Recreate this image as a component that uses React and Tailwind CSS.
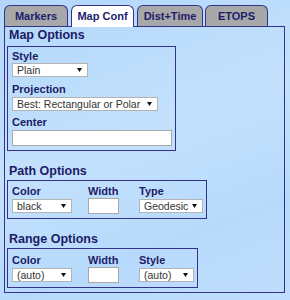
import React from "react";

function Select({ value, w }) {
  return (
    <div
      className={`flex items-center justify-between h-[14px] border border-[#b3b3b3] bg-white pl-[4px] pr-[5px] text-[10.5px] leading-none text-[#333333] ${w}`}
    >
      <span className="whitespace-nowrap">{value}</span>
      <svg width="5" height="4" viewBox="0 0 5 4" className="shrink-0">
        <polygon points="0,0 5,0 2.5,4" fill="#111" />
      </svg>
    </div>
  );
}

function Input({ w }) {
  return <div className={`h-[16px] border border-[#a8a8a8] bg-white ${w}`} />;
}

function Label({ children, className = "" }) {
  return (
    <div className={`text-[11px] font-bold leading-[13px] text-[#1c1c66] ${className}`}>
      {children}
    </div>
  );
}

function Heading({ children, className = "" }) {
  return (
    <div className={`ml-[2px] text-[12.5px] font-bold leading-[15px] text-[#1c1c66] ${className}`}>
      {children}
    </div>
  );
}

function Tab({ label, active, className }) {
  return (
    <div
      className={`flex items-center justify-center border border-b-0 border-[#33338a] rounded-t-[6px] text-[11px] font-bold text-[#1d1d6b] ${
        active ? "relative z-10 h-[22px] -mb-px bg-white" : "h-[21px] bg-[#a8a8a8]"
      } ${className}`}
    >
      {label}
    </div>
  );
}

function ThreeCol({ a, b, c }) {
  return (
    <div className="flex">
      <div className="w-[76px]">{a}</div>
      <div className="w-[51px]">{b}</div>
      <div>{c}</div>
    </div>
  );
}

export default function App() {
  return (
    <div className="w-[290px] h-[300px] overflow-hidden pt-[5px] pl-[4px] font-['Liberation_Sans',Arial,sans-serif] bg-[linear-gradient(160deg,#b3d7fb_0%,#c3e1fd_45%,#b7dafc_75%,#c0defd_100%)]">
      <div className="flex items-end h-[21px]">
        <Tab label="Markers" className="w-[64px]" />
        <Tab label="Map Conf" active className="ml-[3px] w-[63px]" />
        <Tab label="Dist+Time" className="ml-[3px] w-[66px]" />
        <Tab label="ETOPS" className="ml-[2px] w-[63px]" />
      </div>
      <div className="w-[281px] h-[267px] border border-[#33338a] pl-[2px]">
        <Heading className="mt-[1px]">Map Options</Heading>
        <div className="mt-[3px] w-fit border border-[#33338a] pl-[4px] pr-[3px] pt-[3px] pb-[4px]">
          <Label>Style</Label>
          <Select value="Plain" w="w-[76px]" />
          <Label className="mt-[6px]">Projection</Label>
          <div className="mt-[1px]">
            <Select value="Best: Rectangular or Polar" w="w-[146px]" />
          </div>
          <Label className="mt-[5px]">Center</Label>
          <div className="mt-[1px]">
            <Input w="w-[160px]" />
          </div>
        </div>

        <Heading className="mt-[13px]">Path Options</Heading>
        <div className="mt-[1px] w-fit border border-[#33338a] pl-[4px] pr-[3px] pt-[4px] pb-[4px]">
          <ThreeCol a={<Label>Color</Label>} b={<Label>Width</Label>} c={<Label>Type</Label>} />
          <div className="flex items-center h-[16px]">
            <div className="w-[76px]">
              <Select value="black" w="w-[60px]" />
            </div>
            <div className="w-[51px]">
              <Input w="w-[31px]" />
            </div>
            <Select value="Geodesic" w="w-[64px]" />
          </div>
        </div>

        <Heading className="mt-[13px]">Range Options</Heading>
        <div className="mt-[1px] w-fit border border-[#33338a] pl-[4px] pr-[3px] pt-[5px] pb-[4px]">
          <ThreeCol a={<Label>Color</Label>} b={<Label>Width</Label>} c={<Label>Style</Label>} />
          <div className="flex items-center h-[16px]">
            <div className="w-[76px]">
              <Select value="(auto)" w="w-[60px]" />
            </div>
            <div className="w-[51px]">
              <Input w="w-[31px]" />
            </div>
            <Select value="(auto)" w="w-[55px]" />
          </div>
        </div>
      </div>
    </div>
  );
}
